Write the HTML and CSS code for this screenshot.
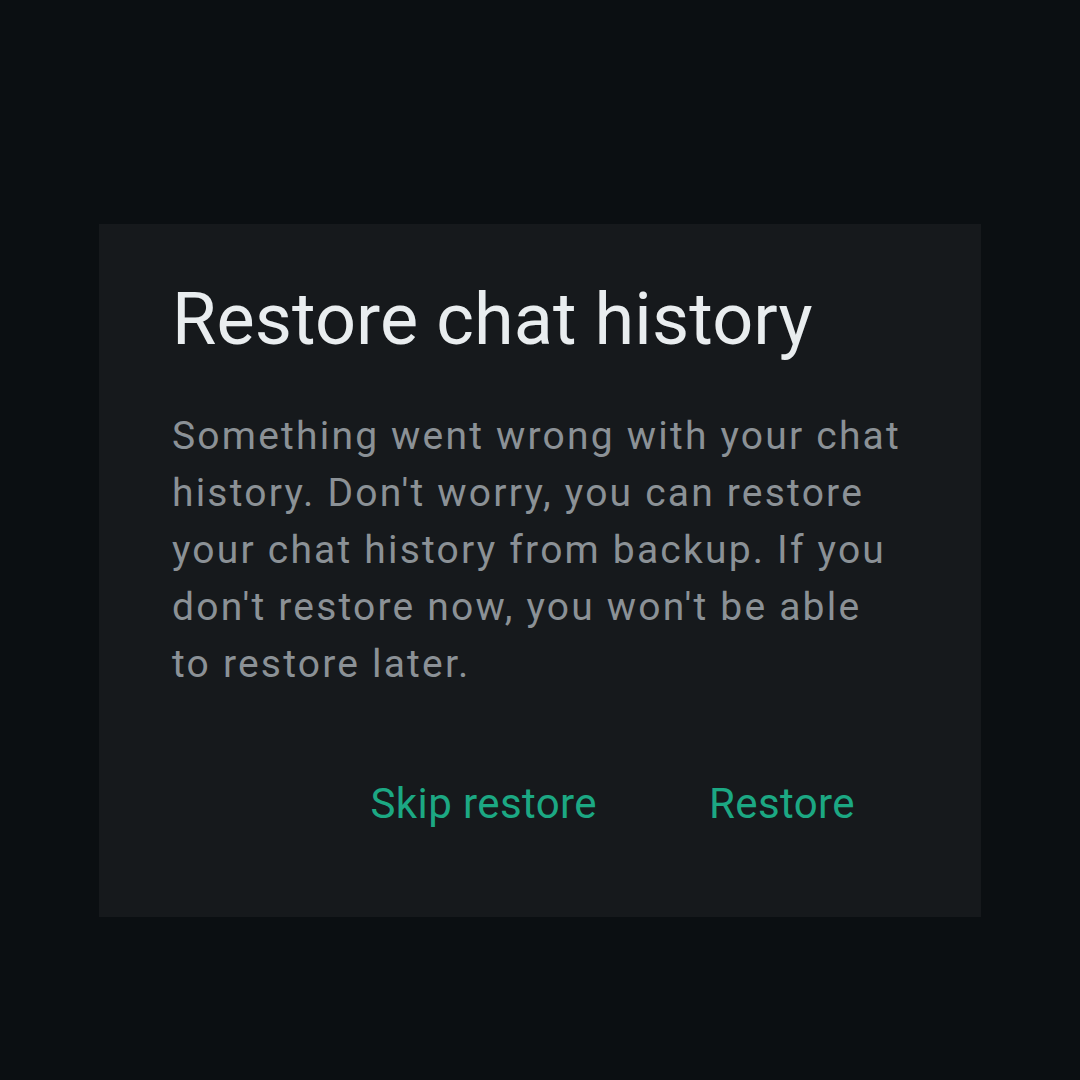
FILE: index.html
```html
<!DOCTYPE html>
<html lang="en">
<head>
<meta charset="utf-8">
<title>Restore chat history</title>
<link rel="stylesheet" href="styles.css">
</head>
<body>
<div class="dialog">
  <h1 class="title">Restore chat history</h1>
  <p class="message">Something went wrong with your chat history. Don't worry, you can restore your chat history from backup. If you don't restore now, you won't be able to restore later.</p>
  <div class="actions">
    <button class="action skip">Skip restore</button>
    <button class="action restore">Restore</button>
  </div>
</div>
</body>
</html>
```

FILE: styles.css
```css
html, body {
  margin: 0;
  padding: 0;
  background: #0b0f12;
  height: 100%;
}
body {
  padding-top: 224px;
  box-sizing: border-box;
  font-family: Roboto, "Noto Sans", sans-serif;
}
.dialog {
  margin: 0 99px;
  background: #16191c;
  height: 693px;
  box-sizing: border-box;
  padding: 52px 73px 0 73px;
  display: flex;
  flex-direction: column;
}
.title {
  margin: 0;
  font-size: 72px;
  line-height: 88px;
  font-weight: 400;
  color: #e9edef;
  letter-spacing: 0.1px;
}
.message {
  margin: 44px 0 0 0;
  font-size: 39px;
  line-height: 57px;
  color: #8b9196;
  letter-spacing: 2.2px;
  width: 740px;
}
.actions {
  margin-top: 86px;
  display: flex;
  justify-content: flex-end;
  gap: 112px;
  padding-right: 53px;
}
.action {
  background: none;
  border: none;
  padding: 0;
  font-family: Roboto, "Noto Sans", sans-serif;
  font-size: 42px;
  line-height: 50px;
  font-weight: 400;
  color: #1ca883;
  letter-spacing: 0.4px;
}
```
